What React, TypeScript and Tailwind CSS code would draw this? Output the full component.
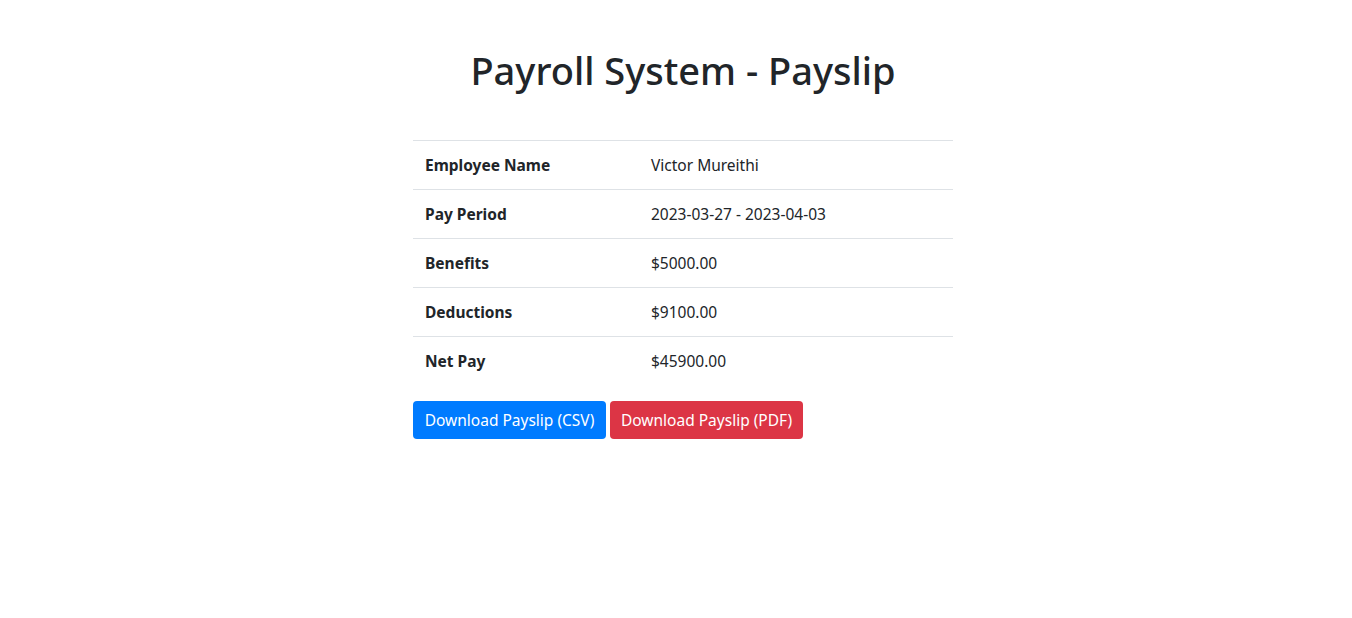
import React from "react";

const rows: [string, string][] = [
  ["Employee Name", "Victor Mureithi"],
  ["Pay Period", "2023-03-27 - 2023-04-03"],
  ["Benefits", "$5000.00"],
  ["Deductions", "$9100.00"],
  ["Net Pay", "$45900.00"],
];

export default function App() {
  return (
    <div
      className="min-h-screen bg-white text-[#212529]"
      style={{ fontFamily: '"Segoe UI", "Noto Sans", Roboto, sans-serif' }}
    >
      <div className="w-[554px] mx-auto pl-[14px] pt-[46px]">
        <h1 className="text-center text-[38px] leading-[48px] font-medium">
          Payroll System - Payslip
        </h1>
        <table className="w-full mt-[46px] text-[15.5px] leading-[24px] border-collapse">
          <tbody>
            {rows.map(([k, v]) => (
              <tr key={k} className="border-t border-[#dee2e6]">
                <td className="w-[226px] p-3 font-bold">{k}</td>
                <td className="p-3">{v}</td>
              </tr>
            ))}
          </tbody>
        </table>
        <div className="mt-4 flex gap-1">
          <button className="w-[193px] h-[38px] rounded-[4px] bg-[#007bff] text-white text-[15.5px] leading-[24px] text-center">
            Download Payslip (CSV)
          </button>
          <button className="w-[193px] h-[38px] rounded-[4px] bg-[#dc3545] text-white text-[15.5px] leading-[24px] text-center">
            Download Payslip (PDF)
          </button>
        </div>
      </div>
    </div>
  );
}
